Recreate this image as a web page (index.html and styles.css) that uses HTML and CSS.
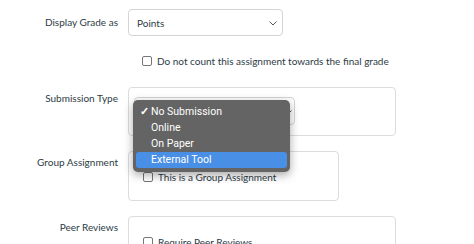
FILE: index.html
```html
<!DOCTYPE html>
<html>
<head>
    <title>Assignment Settings</title>
    <link rel="stylesheet" href="styles.css">
</head>
<body>
    <div class="form">
        <div class="row grade-row">
            <div class="label">Display Grade as</div>
            <div class="select grade-select">
                <span>Points</span>
                <svg class="chevron" width="8" height="5" viewBox="0 0 8 5"><path d="M0.5 0.5 L4 4 L7.5 0.5" fill="none" stroke="#555" stroke-width="1"/></svg>
            </div>
        </div>

        <div class="row final-row">
            <div></div>
            <label class="check"><span class="box"></span>Do not count this assignment towards the final grade</label>
        </div>

        <div class="row submission-row">
            <div class="label">Submission Type</div>
            <div class="group wide submission">
                <div class="select sub-select">
                    <svg class="chevron" width="8" height="5" viewBox="0 0 8 5"><path d="M0.5 0.5 L4 4 L7.5 0.5" fill="none" stroke="#555" stroke-width="1"/></svg>
                </div>
                <ul class="menu">
                    <li><span class="tick">&#10003;</span>No Submission</li>
                    <li>Online</li>
                    <li>On Paper</li>
                    <li class="active">External Tool</li>
                </ul>
            </div>
        </div>

        <div class="row group-row">
            <div class="label">Group Assignment</div>
            <div class="group narrow">
                <label class="check"><span class="box"></span>This is a Group Assignment</label>
            </div>
        </div>

        <div class="row peer-row">
            <div class="label">Peer Reviews</div>
            <div class="group wide peer">
                <label class="check"><span class="box"></span>Require Peer Reviews</label>
            </div>
        </div>
    </div>
</body>
</html>
```

FILE: styles.css
```css
body {
    margin: 0;
    background: #fff;
    font-family: Lato, 'Open Sans', sans-serif;
    color: #2d3b45;
    font-size: 10px;
    overflow: hidden;
}
.form {
    padding-top: 9px;
}
.row {
    display: grid;
    grid-template-columns: 118px auto;
    column-gap: 10px;
    align-items: start;
    justify-items: start;
}
.label {
    justify-self: end;
    line-height: 14px;
    padding-top: 4px;
    white-space: nowrap;
}
.grade-row .label {
    padding-top: 6px;
}
.final-row {
    margin-top: 18px;
}
.submission-row {
    margin-top: 19px;
}
.group-row {
    margin-top: 15px;
}
.peer-row {
    margin-top: 15px;
}
.select {
    position: relative;
    box-sizing: border-box;
    border: 1px solid #d4d4d4;
    border-radius: 4px;
    background: #fff;
    height: 27px;
    display: flex;
    align-items: center;
    padding-left: 8px;
}
.grade-select {
    width: 155px;
}
.chevron {
    position: absolute;
    right: 5px;
    top: 11px;
}
.check {
    display: flex;
    align-items: center;
    gap: 5px;
    line-height: 14px;
    white-space: nowrap;
}
.box {
    width: 8px;
    height: 8px;
    border: 1px solid #777;
    border-radius: 2px;
    background: #fff;
}
.final-row .check {
    margin-left: 14px;
}
.group {
    position: relative;
    box-sizing: border-box;
    border: 1px solid #dcdcdc;
    border-radius: 4px;
}
.wide {
    width: 268px;
}
.narrow {
    width: 211px;
    height: 50px;
    padding: 18px 0 0 14px;
}
.submission {
    height: 49px;
    padding: 9px 0 0 5px;
}
.peer {
    height: 40px;
    padding: 18px 0 0 14px;
}
.sub-select {
    width: 161px;
    height: 28px;
}
.sub-select .chevron {
    top: 12px;
    right: 2px;
}
.menu {
    position: absolute;
    left: 4px;
    top: 12px;
    width: 157px;
    margin: 0;
    padding: 4px 3px;
    box-sizing: border-box;
    list-style: none;
    background: #646464;
    border-radius: 5px;
    box-shadow: 0 3px 10px rgba(0, 0, 0, 0.35);
    font-family: Roboto, 'Liberation Sans', sans-serif;
    font-size: 10.5px;
    color: #fff;
    z-index: 10;
}
.menu li {
    height: 16px;
    line-height: 16px;
    padding-left: 15px;
    position: relative;
    border-radius: 3px;
}
.menu .tick {
    position: absolute;
    left: 4px;
    font-size: 11px;
    font-weight: bold;
}
.menu .active {
    background: #4a8fe6;
}
```
